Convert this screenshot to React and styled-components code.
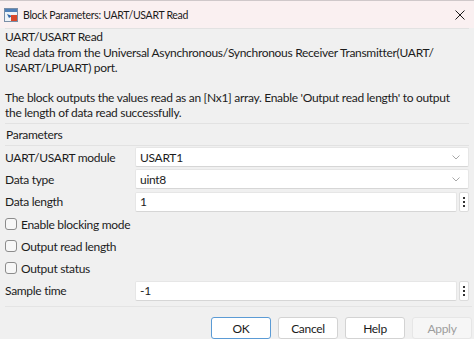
import styled, { createGlobalStyle } from 'styled-components';

const GlobalStyle = createGlobalStyle`
  html, body {
    margin: 0;
    padding: 0;
    background: #f0f0f0;
  }
  body {
    font-family: Lato, "Noto Sans", sans-serif;
    font-size: 12px;
    letter-spacing: -0.3px;
    color: #1c1c1c;
  }
`;

const Dialog = styled.div`
  width: 474px;
  height: 339px;
  overflow: hidden;
  display: flex;
  flex-direction: column;
  background: #f0f0f0;
`;

const TitleBar = styled.div`
  height: 27px;
  flex: none;
  display: flex;
  align-items: center;
  gap: 5px;
  padding: 0 9px 0 4px;
  background: #faf0f1;
  border-top: 1px solid #cfc8ca;
`;

const TitleText = styled.span`
  flex: 1;
  font-size: 10.5px;
  color: #1a1a1a;
`;

const Body = styled.div`
  flex: 1;
  display: flex;
  flex-direction: column;
  padding: 0 5px;
`;

const Panel = styled.div`
  border-top: 1px solid #e2e2e2;
`;

const PanelTitle = styled.div`
  line-height: 14px;
  padding-top: 1px;
`;

const Line = styled.div`
  height: 15px;
  line-height: 15px;
  white-space: nowrap;
`;

const Spacer = styled.div`
  height: ${(p) => p.h}px;
`;

const Params = styled.div`
  border-top: 1px solid #e2e2e2;
  margin-top: 3px;
`;

const ParamsTitle = styled.div`
  line-height: 21px;
  padding-left: 1px;
  border-bottom: 1px solid #e2e2e2;
`;

const Rows = styled.div`
  display: flex;
  flex-direction: column;
`;

const Row = styled.div`
  height: ${(p) => p.h || 22}px;
  display: grid;
  grid-template-columns: 130px 1fr;
  align-items: center;
`;

const Field = styled.div`
  height: 20px;
  display: flex;
  align-items: center;
  gap: 2px;
`;

const Input = styled.div`
  flex: 1;
  height: 20px;
  box-sizing: border-box;
  display: flex;
  align-items: center;
  justify-content: space-between;
  padding: 0 8px 0 4px;
  background: #ffffff;
  border: 1px solid #e6e6e6;
  border-bottom-color: #d6d6d6;
  border-radius: 2px;
`;

const MoreButton = styled.div`
  width: 10px;
  height: 20px;
  box-sizing: border-box;
  display: flex;
  align-items: center;
  justify-content: center;
  background: #ffffff;
  border: 1px solid #dcdcdc;
  border-radius: 2px;
`;

const CheckRow = styled.label`
  height: 22px;
  display: flex;
  align-items: center;
  gap: 4px;
`;

const Box = styled.span`
  width: 12px;
  height: 12px;
  box-sizing: border-box;
  border: 1px solid #8c8c8c;
  border-radius: 3px;
  background: #f7f7f7;
`;

const Footer = styled.div`
  margin-top: auto;
  border-top: 1px solid #e4e4e4;
  display: flex;
  justify-content: flex-end;
  gap: 7px;
  padding: 10px 0 0;
  margin-right: -3px;
`;

const Button = styled.div`
  width: 60px;
  height: 22px;
  box-sizing: border-box;
  display: flex;
  align-items: center;
  justify-content: center;
  background: ${(p) => (p.disabled ? '#f6f6f6' : '#ffffff')};
  color: ${(p) => (p.disabled ? '#9d9d9d' : '#1a1a1a')};
  border: 1px solid ${(p) => (p.primary ? '#5b9bd5' : p.disabled ? '#e6e6e6' : '#d3d3d3')};
  border-radius: 3px;
`;

function WindowIcon() {
  return (
    <svg width="14" height="14" viewBox="0 0 14 14">
      <rect x="0.5" y="0.5" width="13" height="13" fill="#eef3f8" stroke="#7a8ea6" />
      <rect x="1" y="1" width="12" height="3" fill="#4f7fb8" />
      <path d="M3 6 L8 8 L5 10 Z" fill="#2f65a8" />
      <rect x="7" y="7" width="6" height="6" fill="#d9482b" />
    </svg>
  );
}

function CloseIcon() {
  return (
    <svg width="10" height="10" viewBox="0 0 10 10">
      <path d="M0.5 0.5 L9.5 9.5 M9.5 0.5 L0.5 9.5" stroke="#1a1a1a" strokeWidth="1" />
    </svg>
  );
}

function Chevron() {
  return (
    <svg width="8" height="5" viewBox="0 0 8 5">
      <path d="M0.5 0.5 L4 4 L7.5 0.5" fill="none" stroke="#a8a8a8" strokeWidth="1" />
    </svg>
  );
}

function Dots() {
  return (
    <svg width="2" height="10" viewBox="0 0 2 10">
      <rect x="0" y="0" width="2" height="2" fill="#333" />
      <rect x="0" y="4" width="2" height="2" fill="#333" />
      <rect x="0" y="8" width="2" height="2" fill="#333" />
    </svg>
  );
}

function SelectRow({ label, value }) {
  return (
    <Row>
      <span>{label}</span>
      <Field>
        <Input>
          <span>{value}</span>
          <Chevron />
        </Input>
      </Field>
    </Row>
  );
}

function EditRow({ label, value }) {
  return (
    <Row h={23}>
      <span>{label}</span>
      <Field>
        <Input>{value}</Input>
        <MoreButton>
          <Dots />
        </MoreButton>
      </Field>
    </Row>
  );
}

function Check({ label }) {
  return (
    <CheckRow>
      <Box />
      {label}
    </CheckRow>
  );
}

const description = [
  'Read data from the Universal Asynchronous/Synchronous Receiver Transmitter(UART/',
  'USART/LPUART) port.',
  '',
  "The block outputs the values read as an [Nx1] array. Enable 'Output read length' to output",
  'the length of data read successfully.',
];

export default function App() {
  return (
    <Dialog>
      <GlobalStyle />
      <TitleBar>
        <WindowIcon />
        <TitleText>Block Parameters: UART/USART Read</TitleText>
        <CloseIcon />
      </TitleBar>
      <Body>
        <Panel>
          <PanelTitle>UART/USART Read</PanelTitle>
          <Spacer h={1} />
          {description.map((text, i) => (
            <Line key={i}>{text}</Line>
          ))}
        </Panel>
        <Params>
          <ParamsTitle>Parameters</ParamsTitle>
          <Rows>
            <SelectRow label="UART/USART module" value="USART1" />
            <SelectRow label="Data type" value="uint8" />
            <EditRow label="Data length" value="1" />
            <Check label="Enable blocking mode" />
            <Check label="Output read length" />
            <Check label="Output status" />
            <EditRow label="Sample time" value="-1" />
          </Rows>
        </Params>
        <Footer>
          <Button primary>OK</Button>
          <Button>Cancel</Button>
          <Button>Help</Button>
          <Button disabled>Apply</Button>
        </Footer>
      </Body>
    </Dialog>
  );
}
